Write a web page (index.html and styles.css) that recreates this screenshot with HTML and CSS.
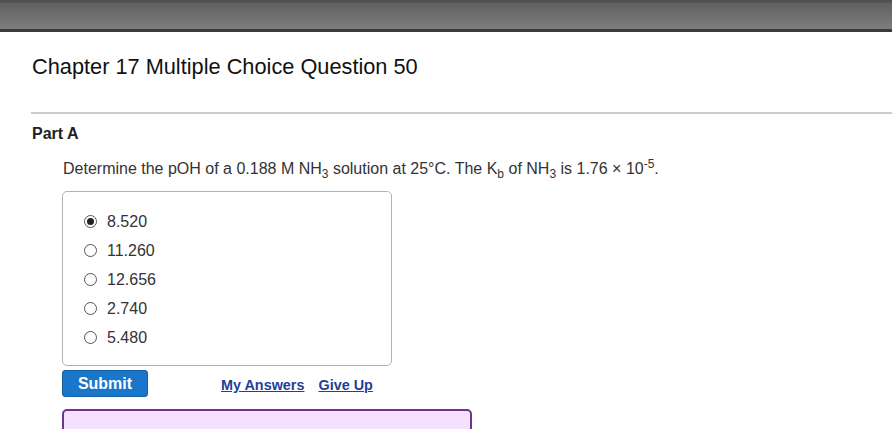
FILE: index.html
```html
<!DOCTYPE html>
<html>
<head>
<meta charset="utf-8">
<link rel="stylesheet" href="styles.css">
</head>
<body>
<div class="topbar"></div>
<div class="page">
  <h1 class="title">Chapter 17 Multiple Choice Question 50</h1>
  <hr class="rule">
  <h2 class="part">Part A</h2>
  <div class="part-body">
    <p class="question">Determine the pOH of a 0.188 M NH<sub>3</sub> solution at 25°C. The K<sub>b</sub> of NH<sub>3</sub> is 1.76 × 10<sup>-5</sup>.</p>
    <div class="choices">
      <label class="choice"><span class="radio checked"></span><span class="val">8.520</span></label>
      <label class="choice"><span class="radio"></span><span class="val">11.260</span></label>
      <label class="choice"><span class="radio"></span><span class="val">12.656</span></label>
      <label class="choice"><span class="radio"></span><span class="val">2.740</span></label>
      <label class="choice"><span class="radio"></span><span class="val">5.480</span></label>
    </div>
    <div class="actions">
      <button class="submit">Submit</button>
      <a class="link" href="#">My Answers</a>
      <a class="link" href="#">Give Up</a>
    </div>
    <div class="feedback"></div>
  </div>
</div>
</body>
</html>
```
FILE: styles.css
```css
html, body {
  margin: 0;
  padding: 0;
  background: #fff;
  font-family: "Liberation Sans", Arial, sans-serif;
  color: #333;
  overflow: hidden;
  height: 429px;
}
.topbar {
  height: 29px;
  background: linear-gradient(#4f4f4f 0, #4f4f4f 2px, #606060 3px, #7e7e7e 100%);
  border-bottom: 3px solid #3a3a3a;
}
.page {
  padding-left: 31px;
}
.title {
  margin: 0;
  padding-top: 21px;
  font-size: 21.75px;
  font-weight: normal;
  line-height: 28px;
  color: #111;
  padding-left: 1px;
}
.rule {
  margin: 31px 0 0 0;
  border: 0;
  height: 2px;
  background: #cccccc;
}
.part {
  margin: 10px 0 0 1px;
  font-size: 16px;
  font-weight: bold;
  line-height: 20px;
  color: #222;
}
.part-body {
  padding-left: 31px;
}
.question {
  margin: 14px 0 0 1px;
  font-size: 16px;
  line-height: 22px;
  color: #333;
}
.question sub, .question sup {
  font-size: 12px;
  line-height: 0;
}
.question sub {
  vertical-align: -4px;
}
.question sup {
  vertical-align: 6px;
}
.choices {
  margin-top: 11px;
  width: 330px;
  height: 175px;
  border: 1px solid #b3b3b3;
  border-radius: 5px;
  box-sizing: border-box;
  padding-top: 15px;
  display: flex;
  flex-direction: column;
}
.choice {
  display: flex;
  align-items: center;
  height: 29px;
  flex: none;
  padding-left: 21px;
  font-size: 16px;
  color: #333;
}
.radio {
  width: 11px;
  height: 11px;
  border: 1px solid #555;
  border-radius: 50%;
  margin-right: 10px;
  position: relative;
  background: #fff;
}
.radio.checked::after {
  content: "";
  position: absolute;
  left: 2px;
  top: 2px;
  width: 7px;
  height: 7px;
  border-radius: 50%;
  background: #222;
}
.actions {
  margin-top: 4px;
  display: flex;
  align-items: center;
  height: 27px;
}
.submit {
  width: 86px;
  height: 27px;
  background: #1a76c9;
  border: 1px solid #1560a5;
  border-radius: 3px;
  color: #fff;
  font-family: "Liberation Sans", Arial, sans-serif;
  font-size: 16px;
  font-weight: bold;
  padding: 0;
  margin-right: 73px;
}
.link {
  font-size: 14.4px;
  font-weight: bold;
  color: #1e3f9a;
  text-decoration: underline;
  margin-right: 14px;
  margin-top: 3px;
}
.feedback {
  margin-top: 12px;
  width: 410px;
  height: 40px;
  background: #f4e1fd;
  border: 2px solid #6f3390;
  border-radius: 5px;
  box-sizing: border-box;
}
```
